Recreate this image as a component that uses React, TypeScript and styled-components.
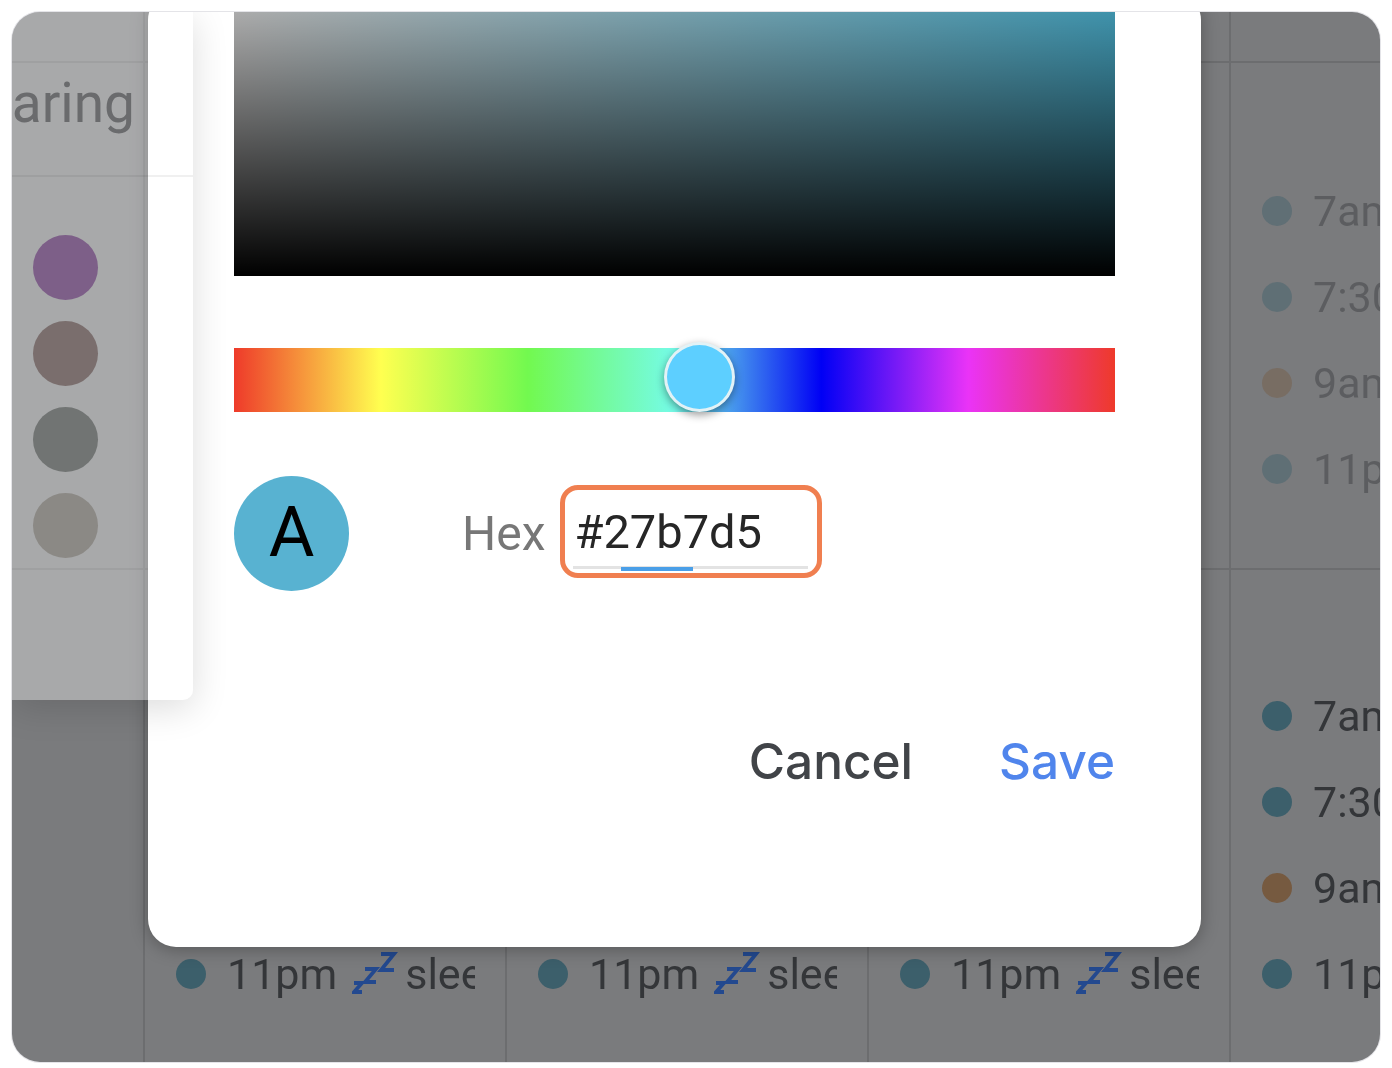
import styled, { createGlobalStyle } from 'styled-components';

const GlobalStyle = createGlobalStyle`
  html, body {
    margin: 0;
    padding: 0;
    background: #ffffff;
    font-family: Roboto, "Liberation Sans", sans-serif;
  }
`;

const Page = styled.div`
  width: 1392px;
  height: 1068px;
  box-sizing: border-box;
  padding: 12px;
`;
const Window = styled.div`
  position: relative;
  width: 1368px;
  height: 1050px;
  border-radius: 28px;
  overflow: hidden;
  background: #7a7b7d;
  box-shadow: 0 0 0 1px #e4e4e8;
  filter: blur(0.6px);
`;

const CalendarGrid = styled.div`
  display: grid;
  grid-template-columns: 131px 362px 362px 362px 151px;
  grid-template-rows: 49px 507px 494px;
  width: 100%;
  height: 100%;
`;
const GridCell = styled.div`
  border-left: 2px solid #6c6d6f;
  border-top: 2px solid #6c6d6f;
  box-sizing: border-box;
  min-width: 0;
  overflow: hidden;
  &:nth-child(5n + 1) {
    border-left: none;
  }
  &:nth-child(-n + 5) {
    border-top: none;
  }
`;
const DayCell = styled(GridCell)<{ $faded?: boolean }>`
  padding: ${(p) => (p.$faded ? 105 : 103)}px 30px 0 31px;
  &:nth-child(5n) {
    padding-right: 0;
  }
`;
const EntryList = styled.div<{ $faded?: boolean }>`
  display: flex;
  flex-direction: column;
  opacity: ${(p) => (p.$faded ? 0.42 : 1)};
`;
const Entry = styled.div<{ $covered?: boolean }>`
  height: 86px;
  display: flex;
  align-items: center;
  gap: 21px;
  white-space: nowrap;
  overflow: hidden;
  visibility: ${(p) => (p.$covered ? 'hidden' : 'visible')};
`;
const EntryDot = styled.span<{ $color: string }>`
  flex: none;
  width: 30px;
  height: 30px;
  border-radius: 50%;
  background: ${(p) => p.$color};
`;
const EntryText = styled.span`
  font-size: 43px;
  color: #343639;
  display: flex;
  align-items: center;
`;
const SleepIcon = styled.svg`
  width: 46px;
  height: 48px;
  margin: 4px 7px 0 15px;
  flex: none;
`;

const SidePanel = styled.div`
  position: absolute;
  left: 0;
  top: 0;
  width: 181px;
  height: 688px;
  border-bottom-right-radius: 10px;
  background: rgba(255, 255, 255, 0.35);
  box-shadow: 0 8px 36px rgba(0, 0, 0, 0.14);
  overflow: hidden;
`;
const PanelTitle = styled.div`
  height: 165px;
  box-sizing: border-box;
  border-bottom: 2px solid rgba(0, 0, 0, 0.06);
  padding: 60px 58px 0 0;
  display: flex;
  justify-content: flex-end;
  font-size: 55px;
  line-height: 62px;
  color: #6a6b6d;
  white-space: nowrap;
`;
const SwatchList = styled.div`
  display: flex;
  flex-direction: column;
  gap: 21px;
  padding: 58px 0 0 21px;
`;
const Swatch = styled.div<{ $color: string }>`
  width: 65px;
  height: 65px;
  border-radius: 50%;
  background: ${(p) => p.$color};
`;

const Dialog = styled.div`
  position: absolute;
  left: 136px;
  top: -20px;
  width: 1053px;
  height: 955px;
  box-sizing: border-box;
  padding: 20px 86px 0;
  background: #ffffff;
  border-radius: 28px;
  box-shadow: 0 2px 18px rgba(0, 0, 0, 0.3);
  display: flex;
  flex-direction: column;
`;
const ColorField = styled.div`
  flex: none;
  height: 264px;
  background:
    linear-gradient(to bottom, rgba(0, 0, 0, 0.33), #000000),
    linear-gradient(to right, #ffffff, #5edaff);
`;
const HueBar = styled.div`
  position: relative;
  flex: none;
  height: 64px;
  margin-top: 72px;
  background: linear-gradient(
    to right,
    #ee3a2a 0%,
    #ffff50 16.67%,
    #72f94f 33.33%,
    #75fbe8 50%,
    #0000f5 66.67%,
    #ea33f7 83.33%,
    #ee3a2a 100%
  );
`;
const HueThumb = styled.div`
  position: absolute;
  left: 430px;
  top: -6px;
  width: 71px;
  height: 70px;
  box-sizing: border-box;
  border-radius: 50%;
  background: #5dcfff;
  border: 3px solid #e2f2f6;
  box-shadow: 0 3px 8px rgba(0, 0, 0, 0.4);
`;
const ValueRow = styled.div`
  display: flex;
  align-items: center;
  margin-top: 64px;
`;
const Avatar = styled.div`
  flex: none;
  width: 115px;
  height: 115px;
  box-sizing: border-box;
  padding-bottom: 3px;
  border-radius: 50%;
  background: #58b2d1;
  color: #000000;
  font-size: 70px;
  display: flex;
  align-items: center;
  justify-content: center;
`;
const HexLabel = styled.span`
  margin-left: 113px;
  font-size: 48px;
  color: #777777;
`;
const HexOutline = styled.div`
  position: relative;
  width: 262px;
  height: 93px;
  margin: -4px 0 0 14px;
  box-sizing: border-box;
  border: 5px solid #f07f50;
  border-radius: 18px;
  padding: 14px 0 0 10px;
`;
const HexValue = styled.div`
  font-size: 47px;
  line-height: 56px;
  color: #262626;
`;
const HexUnderline = styled.div`
  position: absolute;
  left: 8px;
  right: 9px;
  bottom: 4px;
  height: 3px;
  background: #e3e3e3;
`;
const HexFocus = styled.div`
  position: absolute;
  left: 56px;
  width: 72px;
  bottom: 2px;
  height: 4px;
  background: #4a9fe8;
`;
const ActionRow = styled.div`
  display: flex;
  justify-content: flex-end;
  gap: 86px;
  margin-top: 139px;
`;
const ActionButton = styled.span<{ $primary?: boolean }>`
  font-family: Inter, Roboto, sans-serif;
  font-size: 49.5px;
  font-weight: 500;
  line-height: 62px;
  color: ${(p) => (p.$primary ? '#5085ec' : '#414448')};
`;

const TEAL = '#3c5f6b';
const ENTRIES = [
  { time: '7am', color: TEAL },
  { time: '7:30am', color: TEAL },
  { time: '9am', color: '#765a40' },
  { time: '11pm', color: TEAL, sleep: true },
];
const SWATCHES = ['#7d5f88', '#7a6e6d', '#717473', '#8b8985'];

const Zzz = () => (
  <SleepIcon viewBox="0 0 46 48" fill="none" stroke="#23498f" strokeWidth="3.8">
    <path d="M2 31h8l-8 9h8" />
    <path d="M13 17h11L13 30h11" />
    <path d="M29 2h13L29 18h13" />
  </SleepIcon>
);

const Entries = ({ faded, coveredAbove }: { faded?: boolean; coveredAbove?: boolean }) => (
  <EntryList $faded={faded}>
    {ENTRIES.map((e) => (
      <Entry key={e.time} $covered={coveredAbove && !e.sleep}>
        <EntryDot $color={e.color} />
        <EntryText>
          {e.time}
          {e.sleep && coveredAbove && (
            <>
              <Zzz />
              sleep
            </>
          )}
        </EntryText>
      </Entry>
    ))}
  </EntryList>
);

const App = () => {
  return (
    <>
      <GlobalStyle />
      <Page>
        <Window>
          <CalendarGrid>
            {[0, 1, 2, 3, 4].map((i) => (
              <GridCell key={i} />
            ))}
            {/* the upper row sits under the dialog except for the last day */}
            {[0, 1, 2, 3].map((i) => (
              <GridCell key={i} />
            ))}
            <DayCell $faded>
              <Entries faded />
            </DayCell>
            <GridCell />
            {[0, 1, 2].map((i) => (
              <DayCell key={i}>
                <Entries coveredAbove />
              </DayCell>
            ))}
            <DayCell>
              <Entries />
            </DayCell>
          </CalendarGrid>
          <Dialog>
            <ColorField />
            <HueBar>
              <HueThumb />
            </HueBar>
            <ValueRow>
              <Avatar>A</Avatar>
              <HexLabel>Hex</HexLabel>
              <HexOutline>
                <HexValue>#27b7d5</HexValue>
                <HexUnderline />
                <HexFocus />
              </HexOutline>
            </ValueRow>
            <ActionRow>
              <ActionButton>Cancel</ActionButton>
              <ActionButton $primary>Save</ActionButton>
            </ActionRow>
          </Dialog>
          <SidePanel>
            <PanelTitle>Sharing</PanelTitle>
            <SwatchList>
              {SWATCHES.map((c) => (
                <Swatch key={c} $color={c} />
              ))}
            </SwatchList>
          </SidePanel>
        </Window>
      </Page>
    </>
  );
};

export default App;
